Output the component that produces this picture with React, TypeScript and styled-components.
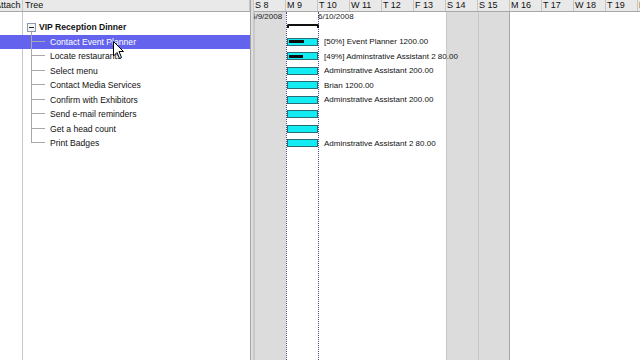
import React, { FC } from 'react';
import styled, { createGlobalStyle } from 'styled-components';

const GlobalStyle = createGlobalStyle`
    html, body {
        margin: 0;
        padding: 0;
        background: #fff;
        overflow: hidden;
    }
    body {
        font-family: "Liberation Sans", Arial, sans-serif;
    }
`;

const ROW_H = 14.5;
const DAY_W = 32;

type Task = { name: string; progress?: number; label?: string };

const tasks: Task[] = [
    { name: 'Contact Event Planner', progress: 0.5, label: '[50%] Event Planner 1200.00' },
    { name: 'Locate restaurants', progress: 0.49, label: '[49%] Adminstrative Assistant 2 80.00' },
    { name: 'Select menu', label: 'Adminstrative Assistant 200.00' },
    { name: 'Contact Media Services', label: 'Brian 1200.00' },
    { name: 'Confirm with Exhibitors', label: 'Adminstrative Assistant 200.00' },
    { name: 'Send e-mail reminders' },
    { name: 'Get a head count' },
    { name: 'Print Badges', label: 'Adminstrative Assistant 2 80.00' },
];

const days = [
    { l: 'S 8', we: true },
    { l: 'M 9' },
    { l: 'T 10' },
    { l: 'W 11' },
    { l: 'T 12' },
    { l: 'F 13' },
    { l: 'S 14', we: true },
    { l: 'S 15', we: true, end: true },
    { l: 'M 16' },
    { l: 'T 17' },
    { l: 'W 18' },
    { l: 'T 19' },
    { l: 'F 20' },
];

const Window = styled.div`
    display: flex;
    width: 640px;
    height: 360px;
    background: #fff;
    overflow: hidden;
`;

const LeftPanel = styled.div`
    width: 250px;
    flex: none;
    display: flex;
    flex-direction: column;
    border-right: 1px solid #a4a4a4;
`;

const HeaderRow = styled.div`
    display: flex;
    height: 12px;
    flex: none;
    background: #e9e9e9;
    border-bottom: 1px solid #a8a8a8;
    box-sizing: border-box;
    font-size: 9px;
    line-height: 11px;
    color: #111;
    overflow: hidden;
`;

const HeadCell = styled.div<{ $w?: number }>`
    width: ${p => (p.$w ? `${p.$w}px` : 'auto')};
    flex: ${p => (p.$w ? 'none' : '1')};
    box-sizing: border-box;
    border-right: 1px solid #c6c6c6;
    padding-left: 2px;
    white-space: nowrap;
    overflow: hidden;
`;

const ClippedTitle = styled.span`
    display: inline-block;
    margin-left: -7px;
`;

const TreeBody = styled.div`
    flex: 1;
    position: relative;
    padding-top: 8px;
`;

const AttachLine = styled.div`
    position: absolute;
    left: 22px;
    top: 0;
    bottom: 0;
    width: 1px;
    background: #c6c6c6;
`;

const TreeRow = styled.div<{ $selected?: boolean }>`
    position: relative;
    display: flex;
    align-items: center;
    height: ${ROW_H}px;
    padding-left: 50px;
    font-size: 8.6px;
    color: ${p => (p.$selected ? '#fff' : '#111')};
    background: ${p => (p.$selected ? '#6363ee' : 'transparent')};
    white-space: nowrap;
`;

const GroupRow = styled(TreeRow)`
    padding-left: 27px;
    font-weight: bold;
    gap: 3px;
`;

const ExpandBox = styled.span`
    width: 7px;
    height: 7px;
    border: 1px solid #8a9ab0;
    background: #f4f4f4;
    display: flex;
    align-items: center;
    justify-content: center;
    position: relative;
    &::after {
        content: '';
        width: 5px;
        height: 1px;
        background: #222;
    }
`;

const Branch = styled.span<{ $last?: boolean; $first?: boolean }>`
    position: absolute;
    left: 31px;
    top: ${p => (p.$first ? '-3px' : '0')};
    width: 14px;
    height: ${p => (p.$last ? '50%' : p.$first ? 'calc(100% + 3px)' : '100%')};
    border-left: 1px solid #a8a8a8;
    &::after {
        content: '';
        position: absolute;
        left: 0;
        bottom: ${p => (p.$last ? '0' : `${ROW_H / 2}px`)};
        width: 13px;
        border-top: 1px solid #a8a8a8;
    }
`;

const Splitter = styled.div`
    width: 2px;
    flex: none;
    background: #dedede;
    border-right: 1px solid #c8c8c8;
`;

const Gantt = styled.div`
    flex: 1;
    display: flex;
    flex-direction: column;
    overflow: hidden;
    min-width: 0;
`;

const DayHead = styled.div`
    width: ${DAY_W}px;
    flex: none;
    box-sizing: border-box;
    border-right: 1px solid #c6c6c6;
    padding-left: 1px;
    white-space: nowrap;
`;

const ChartBody = styled.div`
    flex: 1;
    position: relative;
`;

const Columns = styled.div`
    display: flex;
    height: 100%;
`;

const DayCol = styled.div<{ $we?: boolean; $end?: boolean }>`
    width: ${DAY_W}px;
    flex: none;
    box-sizing: border-box;
    background: ${p => (p.$we ? '#dcdcdc' : '#fff')};
    border-left: 1px solid ${p => (p.$we ? '#c8c8c8' : 'transparent')};
    border-right: 1px solid ${p => (p.$end ? '#a6a6a6' : 'transparent')};
`;

const Marker = styled.div<{ $x: number }>`
    position: absolute;
    top: 0;
    bottom: 0;
    left: ${p => p.$x}px;
    border-left: 1px dotted #4c4c8e;
`;

const DateLabel = styled.div<{ $x: number }>`
    position: absolute;
    top: 0;
    left: ${p => p.$x}px;
    font-size: 8px;
    line-height: 10px;
    color: #222;
    white-space: nowrap;
`;

const Rows = styled.div`
    position: absolute;
    inset: 0;
    padding-top: 8px;
`;

const BarRow = styled.div`
    height: ${ROW_H}px;
    display: flex;
    align-items: center;
    padding-left: 33px;
    gap: 6px;
    font-size: 8px;
    color: #111;
    white-space: nowrap;
`;

const Bar = styled.div`
    width: 31px;
    height: 8px;
    flex: none;
    box-sizing: border-box;
    background: #12ecf2;
    border: 1px solid #2a6c78;
    display: flex;
    align-items: center;
    padding: 0 1px;
`;

const Progress = styled.div`
    height: 3px;
    background: #0c0c0c;
`;

const SummaryBar = styled.div`
    width: 32px;
    height: 4px;
    margin-top: -3px;
    box-sizing: border-box;
    border: 2px solid #111;
    border-bottom: none;
    border-radius: 2px 2px 0 0;
`;

const Cursor = styled.svg`
    position: absolute;
    left: 113px;
    top: 41px;
    pointer-events: none;
`;

const App: FC = () => (
    <Window>
        <GlobalStyle />
        <LeftPanel>
            <HeaderRow>
                <HeadCell $w={23}>
                    <ClippedTitle>Attach</ClippedTitle>
                </HeadCell>
                <HeadCell>Tree</HeadCell>
            </HeaderRow>
            <TreeBody>
                <AttachLine />
                <GroupRow>
                    <ExpandBox />
                    VIP Reception Dinner
                </GroupRow>
                {tasks.map((t, i) => (
                    <TreeRow key={t.name} $selected={i === 0}>
                        <Branch $first={i === 0} $last={i === tasks.length - 1} />
                        {t.name}
                    </TreeRow>
                ))}
            </TreeBody>
        </LeftPanel>
        <Splitter />
        <Gantt>
            <HeaderRow>
                {days.map(d => (
                    <DayHead key={d.l}>{d.l}</DayHead>
                ))}
            </HeaderRow>
            <ChartBody>
                <Columns>
                    {days.map(d => (
                        <DayCol key={d.l} $we={d.we} $end={d.end} />
                    ))}
                </Columns>
                <Marker $x={32} />
                <Marker $x={64} />
                <DateLabel $x={-3}>6/9/2008</DateLabel>
                <DateLabel $x={64}>6/10/2008</DateLabel>
                <Rows>
                    <BarRow>
                        <SummaryBar />
                    </BarRow>
                    {tasks.map(t => (
                        <BarRow key={t.name}>
                            <Bar>
                                {t.progress !== undefined && (
                                    <Progress style={{ width: `${t.progress * 29}px` }} />
                                )}
                            </Bar>
                            {t.label}
                        </BarRow>
                    ))}
                </Rows>
            </ChartBody>
        </Gantt>
        <Cursor width="12" height="19" viewBox="0 0 12 19">
            <path d="M0.5 0.5 L0.5 15 L4 11.5 L6.5 17.5 L8.5 16.5 L6 10.5 L10.5 10.5 Z" fill="#fff" stroke="#000" strokeWidth="1" />
        </Cursor>
    </Window>
);

export default App;
